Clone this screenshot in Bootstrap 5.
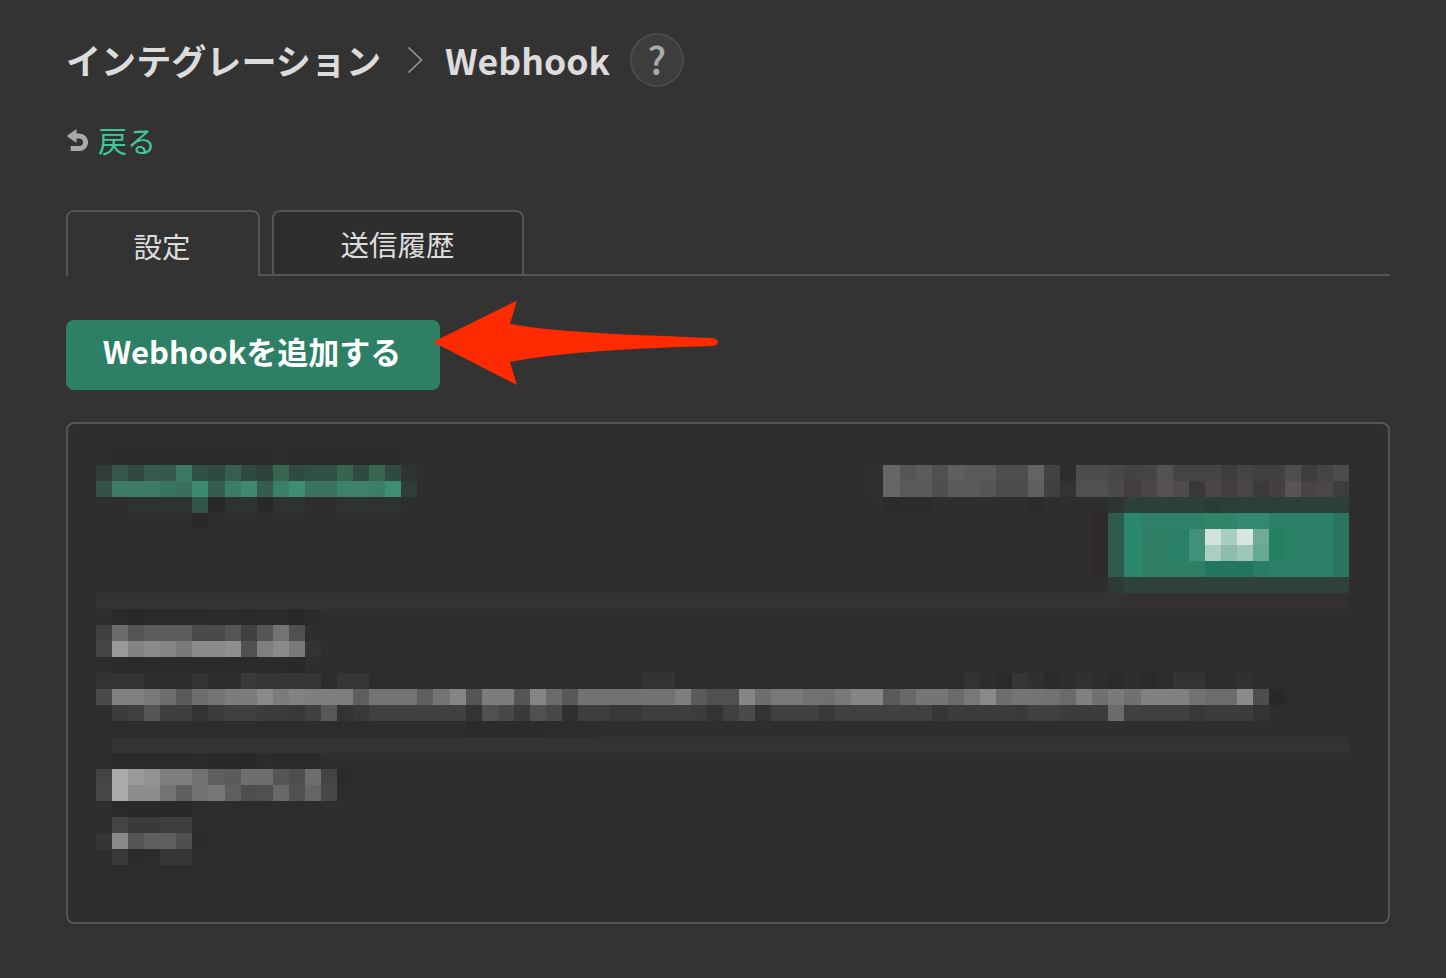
<!DOCTYPE html>
<html lang="ja">
<head>
<meta charset="utf-8">
<title>Webhook</title>
<link href="https://cdn.jsdelivr.net/npm/bootstrap@5.3.0/dist/css/bootstrap.min.css" rel="stylesheet">
<style>
html,body{height:100%}
body{background:#333;color:#ddd;font-family:"Noto Sans CJK JP","Noto Sans",sans-serif;overflow:hidden}
.page-wrap{position:relative;padding:34px 56px 0 66px}
.crumbs{height:52px;font-size:35.1px;font-weight:700;color:#dcdcdc;line-height:50px}
.crumb-end{font-size:35.6px}
.crumb-sep{margin:0 22px 0 26px;display:block}
.help-dot{width:54px;height:54px;margin-left:20px;border-radius:50%;border:2px solid #4b4b4b;background:#3d3d3d;color:#aaa;font-size:38px;font-weight:500;line-height:48px;text-align:center}
.back-row{margin-top:34px;height:40px;font-size:29px;line-height:40px}
.back-row a{color:#3ec99b;text-decoration:none}
.back-row svg{display:block;margin-right:10px}
.tab-strip{margin-top:50px;border-bottom:2px solid #555;gap:12px;height:66px}
.tab-strip .nav-link{height:64px;margin:0;border:2px solid #555;border-bottom:0;border-radius:8px 8px 0 0;font-size:28.5px;color:#ddd;text-align:center;padding:0 1px 0 0;background:#2e2e2e;line-height:64px}
.tab-strip .nav-link:hover{border-color:#555;color:#ddd}
.tab-strip .nav-link.active{background:#333;color:#ddd;border-color:#555;border-bottom:0;height:66px;line-height:68px;width:194px;padding-right:2px}
.tab-strip .tab-two{width:252px}
.add-btn{margin-top:44px;width:374px;height:70px;background:#2d8066;border:0;border-radius:8px;color:#fff;font-size:31px;font-weight:700;padding:0 2px 8px 0;display:block}
.add-btn:hover{background:#2d8066;color:#fff}
.red-arrow{position:absolute;left:430px;top:296px}
.hook-card{margin-top:32px;height:502px;background:#2e2e2e;border:2px solid #555;border-radius:8px;padding:25px 0 0 28px}
.mosaic{display:block;flex:none}
</style>
</head>
<body>
<div class="page-wrap">
  <div class="crumbs d-flex align-items-center">
    <span>インテグレーション</span>
    <svg class="crumb-sep" width="16" height="28" viewBox="0 0 16 28"><path d="M1.5 1.5 14.5 14 1.5 26.5" fill="none" stroke="#999" stroke-width="1.6"/></svg>
    <span class="crumb-end">Webhook</span>
    <div class="help-dot">?</div>
  </div>
  <div class="back-row d-flex align-items-center">
    <svg width="22" height="22" viewBox="0 0 22 22"><path d="M10.5 0 .7 7 10.5 14V9.5H13.3a3.75 3.75 0 0 1 0 7.5H4.7V22H13.3a8.75 8.75 0 0 0 0-17.5H10.5Z" fill="#aaa"/></svg>
    <a href="#">戻る</a>
  </div>
  <ul class="nav nav-tabs tab-strip">
    <li class="nav-item"><a class="nav-link active" href="#">設定</a></li>
    <li class="nav-item"><a class="nav-link tab-two" href="#">送信履歴</a></li>
  </ul>
  <button type="button" class="btn add-btn">Webhookを追加する</button>
  <svg class="red-arrow" width="296" height="96" viewBox="430 296 296 96">
    <path d="M433 342 517 300.5 510 324C560 333 640 335 712 338Q718 339 718 342 718 345 712 346C640 348 560 352 510 362L517 385Z" fill="#ff2a00"/>
  </svg>
  <div class="card hook-card">
    <svg id="mosaic" class="mosaic" width="1268" height="450" viewBox="0 0 1268 450" shape-rendering="crispEdges"></svg>
  </div>
</div>
<script>
// Pixelated content: [row, first column, cell colours]. Two hex digits mean a grey.
var rows=[
[0,1,"2b2a2a 2b2a2a 2b2a2a 2b2a2a 2b2a2a 2b2a2a 2b2a2a 2b2a2a 2b2a2a 2b2a2a 2e 2b2a2a 2b2a2a 2b2a2a 2b2a2a 2b2a2a 2b2a2a 2b2a2a"],
[1,0,"2f3c38 35574b 30473f 365a4e 355a4d 3a7a65 2f5043 2f4a40 356050 30493f 2e443b 376552 2f4a40 315045 315045 37644f 2f4a40 376552 304a42 2d3431"],
[2,0,"34514a 3d7d68 3d7d68 3d7d68 397462 3a6f5e 3c8a6f 355c4e 3b7c66 3c8a70 355c4e 3b7f69 3c8e73 39735f 39735f 3b8269 3b8269 3a7d68 3b9073 2f3d38"],
[3,0,"2d2f2e 2e2e2e 2e3231 2e3231 2e3231 2e3231 32544a 2b2828 2e3231 2e3231 2b2828 2e3231 2e3231 2e2e2e 2e2e2e 2e3231 2e3231 2e3231 2e3231"],
[4,6,"2b2828"],
[1,48,"30 66 55 5c 50 5f 5a 5a 4e 4e 63 42 2d 4c 4c 48 43 45 52 44 44 44 3e 44 41 41 4e 3e 44 4c"],
[2,48,"30 66 5a 5a 4e 5a 5a 55 4c 4c 5f 40 33 50 50 4a 423e3e 4a4548 565250 504c4c 3a3838 4a4646 444040 4a4646 3c3a3a 444040 585454 484444 4c4848 3e3c3e"],
[3,49,"2b 2b 2b"],
[3,58,"2b"],
[3,63,"2f3432 2c3f3a 2c3f3a 2c3f3a 2c3f3a 2c3f3a 2a3c37 2c3f3a 2c3f3a 2c3f3a 2c3f3a 2c3f3a 2c3f3a 2c3f3a 2c3f3a"],
[4,62,"2f2a2a 2f5b4f 2c886c 2f8068 2f8068 2f8068 2f8068 2f8569 2f8569 348a70 348a70 2d8068 2d8068 2d8068 2d8068 2b7560"],
[5,62,"2f2a2a 2f5b4f 2c886c 2f7f66 2f7f66 28806a 42907a d2e2dc a8cdc1 d8e6e0 6fab98 25805f 2d8068 2d8068 2d8068 2b7560"],
[6,62,"2f2a2a 2f5b4f 2c886c 2f7f66 2f7f66 28806a 3f917a abcec2 8dbcad 9ec7b9 66a892 258060 2d8068 2d8068 2d8068 2b7560"],
[7,62,"2f2a2a 2f5b4f 2c886c 2f7f66 2f7f66 2f7f66 2f7f66 22785e 22785e 22785e 2a7c64 2d8068 2d8068 2d8068 2d8068 2b7560"],
[8,63,"2e3a36 30403b 30403b 30403b 30403b 30403b 30403b 30403b 30403b 30403b 30403b 30403b 30403b 30403b 30403b"],
[10,1,"2a 28 2a 2a 2a 2a 2b 2b 2a 2b 2b 28 2b"],
[11,0,"41 6b 55 5c 5c 5c 4a 4a 55 40 55 73 50"],
[12,0,"44 99 83 8a 85 7a 8a 8a 8f 50 7f 8a 7a 33"],
[13,1,"2b 2a 2b 2b 2b 2b 2b 2b 2b 2b 2a 29"],
[14,0,"33 33 33 2c 2c 2e 33 2c 2e 3a 36 36 36 36 2c 36 36 2d 2d 2d 2d 2d 2d 2e 2e 2d 2d 2d 2d 2d 2d 2d 2d 2d 33 33 2d 2d 2e 2e"],
[14,40,"2d 2d 2d 2d 2d 2d 2d 2d 2d 2d 2d 2d 2d 2d 33 2e 2a 36 30 2a 2e 31 2d 2a 2e 2a 2d 33 33 2d 2d 31"],
[15,0,"4a 7f 7f 7a 6e 5a 6e 74 7c 7c 8a 7c 82 7e 7e 7e 5e 74 74 74 5e 74 85 55 7c 7c 55 85 6b 58 72 72 72 72 72 72 7e 5a 50 50 85 6e 78 78 72 70 78 85 85 5a 68 75 75 6a 78 8a 6e 74 74 72 6a 80 70 7a 70 80 80 80 72 6c 6c 8a 4d 28 2c"],
[16,0,"2e 3c 40 55 3e 3e 33 3c 40 40 3c 3c 38 40 58 33 38 40 40 40 40 40 40 33 50 48 3a 50 48 30 3e 3e 38 38 3e 3e 3e 3c 33 40 4a 33 40 40 40 38 40 40 40 40 40 40 36 3c 3c 3c 3c 3a 40 40 3c 3c 3c 6a 40 40 40 40 38 3c 3c 3c 33"],
[17,1,"2c 2c 2c 2c 2c 2c 2c 2c 2c 2c 2c 2c 2c 2c 2c 2c 2c 2c 2c 2c 2c 2c 2a 2b 2b 2a 2b 2c 2c 2c"],
[19,1,"2a 2a 2a 2a 2a 2b 29 29 28 2c 2a 2a 2a"],
[20,0,"44 aa 9a 92 7e 7e 72 5e 5a 6e 6e 55 4e 6e 44 2b"],
[21,0,"48 aa 8c 8c 73 5e 71 77 5e 4e 50 68 50 66 48 2c"],
[22,1,"2a 29 29 29 29 2c 2c 2c 2c 2c 2c 2c 2c"],
[23,1,"44 3a 3a 3e 3e 2c"],
[24,0,"35 8a 55 5e 5e 4f 2a 2d"],
[25,1,"3a 2a 2c 36 36"],
[26,1,"2c 2d 2d 2d 2c"]
];
var bands=[[9,0,64,"333333"],[9,64,14,"333030"],[18,1,77,"333333"]];
var svg=document.getElementById("mosaic"),NS="http://www.w3.org/2000/svg",W=16.07,H=16;
function cell(r,c,n,col){
  var e=document.createElementNS(NS,"rect");
  var x0=Math.round(c*W),x1=Math.round((c+n)*W);
  e.setAttribute("x",x0);e.setAttribute("y",r*H);
  e.setAttribute("width",x1-x0);e.setAttribute("height",H);
  e.setAttribute("fill","#"+col);svg.appendChild(e);
}
bands.forEach(function(b){cell(b[0],b[1],b[2],b[3]);});
rows.forEach(function(r){
  r[2].split(" ").forEach(function(v,i){
    cell(r[0],r[1]+i,1,v.length==2?v+v+v:v);
  });
});
</script>
<script src="https://cdn.jsdelivr.net/npm/bootstrap@5.3.0/dist/js/bootstrap.bundle.min.js"></script>
</body>
</html>
